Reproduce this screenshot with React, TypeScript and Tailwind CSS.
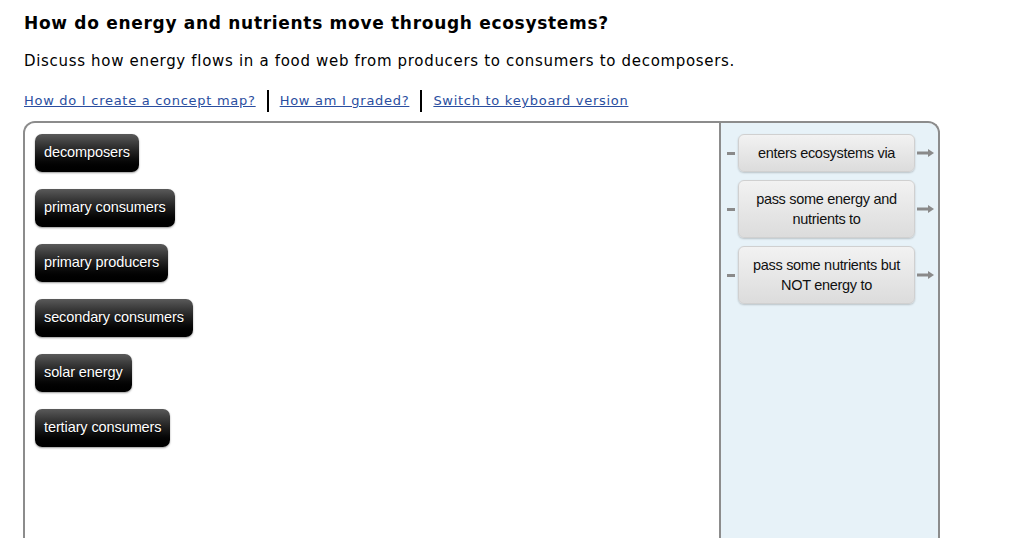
const concepts = [
  "decomposers",
  "primary consumers",
  "primary producers",
  "secondary consumers",
  "solar energy",
  "tertiary consumers",
];

const links = [
  { text: "enters ecosystems via", tall: false },
  { text: "pass some energy and nutrients to", tall: true },
  { text: "pass some nutrients but NOT energy to", tall: true },
];

function Arrow() {
  return (
    <svg width="18" height="10" viewBox="0 0 18 10" className="shrink-0">
      <line x1="0" y1="5" x2="12" y2="5" stroke="#8a8a8a" strokeWidth="3" />
      <polygon points="11,1 17,5 11,9" fill="#8a8a8a" />
    </svg>
  );
}

export default function App() {
  return (
    <div className="w-[1024px] h-[538px] overflow-hidden bg-white font-['Verdana','DejaVu_Sans',sans-serif] text-black">
      <div className="pl-[24px] pt-[12px]">
        <h1 className="text-[17px] leading-[22px] font-bold tracking-[0.7px]">
          How do energy and nutrients move through ecosystems?
        </h1>
        <p className="mt-[17px] text-[15px] leading-[20px] tracking-[0.68px]">
          Discuss how energy flows in a food web from producers to consumers to decomposers.
        </p>
        <div className="mt-[19px] flex items-center text-[13px] leading-[18px] tracking-[0.72px] text-[#2a4ea0]">
          <span className="underline">How do I create a concept map?</span>
          <span className="mx-[11px] w-[2px] h-[22px] bg-black" />
          <span className="underline">How am I graded?</span>
          <span className="mx-[11px] w-[2px] h-[22px] bg-black" />
          <span className="underline">Switch to keyboard version</span>
        </div>
      </div>

      <div className="ml-[23px] mt-[9px] w-[917px] h-[440px] flex rounded-t-[12px] border-2 border-b-0 border-[#8c8c8c] overflow-hidden shadow-[inset_0_2px_3px_rgba(0,0,0,0.25)]">
        <div className="w-[694px] bg-white flex flex-col items-start gap-[17px] pl-[10px] pt-[11px] font-['Liberation_Sans',Arial,sans-serif]">
          {concepts.map((c) => (
            <div
              key={c}
              className="h-[38px] px-[9px] flex items-center rounded-[7px] bg-gradient-to-b from-[#5a5a5a] via-[#1e1e1e] to-black text-white text-[14.5px] tracking-[-0.1px] [text-shadow:0_1px_1px_rgba(0,0,0,0.9)] shadow-[0_1px_2px_rgba(0,0,0,0.4)]"
            >
              {c}
            </div>
          ))}
        </div>
        <div className="w-[2px] bg-[#8c8c8c]" />
        <div className="flex-1 bg-[#e7f2f8] pt-[11px] pl-[6px] flex flex-col gap-[8px] font-['Liberation_Sans',Arial,sans-serif]">
          {links.map((l) => (
            <div key={l.text} className="flex items-center">
              <span className="w-[8px] h-[3px] bg-[#8a8a8a] mr-[3px]" />
              <div
                className={`w-[177px] ${l.tall ? "h-[58px]" : "h-[38px]"} px-[8px] flex items-center justify-center text-center rounded-[6px] border border-[#d0d0d0] bg-gradient-to-b from-[#f2f2f2] to-[#dcdcdc] text-[#111] text-[14.5px] leading-[20px] tracking-[-0.3px] shadow-[0_1px_2px_rgba(0,0,0,0.2)]`}
              >
                {l.text}
              </div>
              <span className="ml-[2px]">
                <Arrow />
              </span>
            </div>
          ))}
        </div>
      </div>
    </div>
  );
}
